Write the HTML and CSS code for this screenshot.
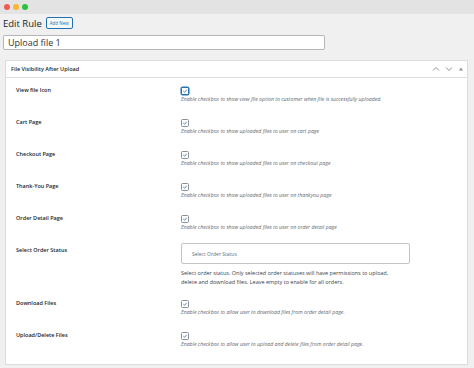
FILE: index.html
```html
<!DOCTYPE html>
<html lang="en">
  <head>
    <meta charset="UTF-8" />
    <title>Edit Rule</title>
    <link rel="stylesheet" href="styles.css">
  </head>
  <body>
    <div class="titlebar">
      <span class="dot red"></span>
      <span class="dot yellow"></span>
      <span class="dot green"></span>
    </div>

    <div class="wrap">
      <div class="page-head">
        <h1>Edit Rule</h1>
        <a class="add-new">Add New</a>
      </div>

      <input class="rule-title" type="text" value="Upload file 1" />

      <div class="postbox">
        <div class="postbox-header">
          <h2>File Visibility After Upload</h2>
          <div class="handle-actions">
            <svg width="8" height="6" viewBox="0 0 8 6"><path d="M1 4.5 4 1.5 7 4.5" fill="none" stroke="#8c8f94" stroke-width="1"/></svg>
            <svg width="8" height="6" viewBox="0 0 8 6"><path d="M1 1.5 4 4.5 7 1.5" fill="none" stroke="#8c8f94" stroke-width="1"/></svg>
            <svg width="6" height="6" viewBox="0 0 6 6"><path d="M1 4.5 3 1.5 5 4.5Z" fill="#8c8f94"/></svg>
          </div>
        </div>

        <div class="postbox-body">
          <div class="field-row">
            <label>View file Icon</label>
            <div class="field">
              <span class="check focused"><svg viewBox="0 0 8 8"><path d="M1.8 4.2 3.4 5.7 6.3 2.4" fill="none" stroke="#2271b1" stroke-width="1.1"/></svg></span>
              <p class="desc">Enable checkbox to show view file option to customer when file is successfully uploaded.</p>
            </div>
          </div>

          <div class="field-row">
            <label>Cart Page</label>
            <div class="field">
              <span class="check"><svg viewBox="0 0 8 8"><path d="M1.8 4.2 3.4 5.7 6.3 2.4" fill="none" stroke="#2271b1" stroke-width="1.1"/></svg></span>
              <p class="desc">Enable checkbox to show uploaded files to user on cart page</p>
            </div>
          </div>

          <div class="field-row">
            <label>Checkout Page</label>
            <div class="field">
              <span class="check"><svg viewBox="0 0 8 8"><path d="M1.8 4.2 3.4 5.7 6.3 2.4" fill="none" stroke="#2271b1" stroke-width="1.1"/></svg></span>
              <p class="desc">Enable checkbox to show uploaded files to user on checkout page</p>
            </div>
          </div>

          <div class="field-row">
            <label>Thank-You Page</label>
            <div class="field">
              <span class="check"><svg viewBox="0 0 8 8"><path d="M1.8 4.2 3.4 5.7 6.3 2.4" fill="none" stroke="#2271b1" stroke-width="1.1"/></svg></span>
              <p class="desc">Enable checkbox to show uploaded files to user on thankyou page</p>
            </div>
          </div>

          <div class="field-row">
            <label>Order Detail Page</label>
            <div class="field">
              <span class="check"><svg viewBox="0 0 8 8"><path d="M1.8 4.2 3.4 5.7 6.3 2.4" fill="none" stroke="#2271b1" stroke-width="1.1"/></svg></span>
              <p class="desc">Enable checkbox to show uploaded files to user on order detail page</p>
            </div>
          </div>

          <div class="field-row select-row">
            <label>Select Order Status</label>
            <div class="field">
              <div class="select-box">Select Order Status</div>
              <p class="help">Select order status. Only selected order statuses will have permissions to upload, delete and download files. Leave empty to enable for all orders.</p>
            </div>
          </div>

          <div class="field-row">
            <label>Download Files</label>
            <div class="field">
              <span class="check"><svg viewBox="0 0 8 8"><path d="M1.8 4.2 3.4 5.7 6.3 2.4" fill="none" stroke="#2271b1" stroke-width="1.1"/></svg></span>
              <p class="desc">Enable checkbox to allow user to download files from order detail page.</p>
            </div>
          </div>

          <div class="field-row">
            <label>Upload/Delete Files</label>
            <div class="field">
              <span class="check"><svg viewBox="0 0 8 8"><path d="M1.8 4.2 3.4 5.7 6.3 2.4" fill="none" stroke="#2271b1" stroke-width="1.1"/></svg></span>
              <p class="desc">Enable checkbox to allow user to upload and delete files from order detail page.</p>
            </div>
          </div>
        </div>
      </div>
    </div>
  </body>
</html>
```

FILE: styles.css
```css
body {
  margin: 0;
  font-family: "Open Sans", "Noto Sans", sans-serif;
  background-color: #f0f0f1;
  color: #1d2327;
}
.titlebar {
  height: 14px;
  background-color: #e3e3e3;
  display: flex;
  align-items: center;
  gap: 3px;
  padding-left: 4px;
}
.dot {
  width: 6px;
  height: 6px;
  border-radius: 50%;
}
.red {
  background-color: #f25a55;
}
.yellow {
  background-color: #f7b731;
}
.green {
  background-color: #2dc23e;
}
.wrap {
  padding: 0 6px 0 3px;
}
.page-head {
  display: flex;
  align-items: center;
  gap: 4px;
  height: 18px;
}
h1 {
  margin: 0;
  font-size: 9.5px;
  font-weight: 400;
  color: #1d2327;
}
.add-new {
  font-size: 4.5px;
  color: #2271b1;
  border: 1px solid #2271b1;
  border-radius: 2px;
  padding: 2px 3px;
  background-color: #f6f7f7;
}
.rule-title {
  display: block;
  box-sizing: border-box;
  width: 322px;
  height: 15px;
  margin: 3px 0 0;
  padding: 0 4px;
  border: 1px solid #b6b6b6;
  border-radius: 2px;
  font-family: inherit;
  font-size: 9px;
  color: #2c3338;
  background-color: #fff;
}
.postbox {
  margin: 10px 0 0 2px;
  background-color: #fff;
  border: 1px solid #dcdcde;
  box-shadow: 0 1px 1px rgba(0, 0, 0, 0.04);
}
.postbox-header {
  display: flex;
  justify-content: space-between;
  align-items: center;
  height: 16px;
  border-bottom: 1px solid #dcdcde;
  padding: 0 3px 0 5px;
}
.postbox-header h2 {
  margin: 0;
  font-size: 5.5px;
  font-weight: 600;
}
.handle-actions {
  display: flex;
  align-items: center;
  gap: 5px;
}
.postbox-body {
  padding: 0 10px 9px;
}
.field-row {
  display: grid;
  grid-template-columns: 165px 1fr;
  height: 32px;
}
.field-row label {
  font-size: 5.5px;
  font-weight: 600;
  padding-top: 9px;
  line-height: 7px;
}
.field {
  padding-top: 9px;
}
.check {
  display: block;
  box-sizing: border-box;
  width: 8px;
  height: 8px;
  border: 1px solid #8c8f94;
  border-radius: 1.5px;
  background-color: #fff;
}
.check svg {
  display: block;
  width: 6px;
  height: 6px;
}
.check.focused {
  border-color: #2271b1;
  box-shadow: 0 0 0 0.5px #2271b1;
}
.desc {
  margin: 1px 0 0;
  font-size: 5.2px;
  font-style: italic;
  color: #646970;
  line-height: 7px;
}
.select-row {
  height: 53px;
}
.select-row .field {
  padding-top: 5px;
}
.select-box {
  box-sizing: border-box;
  width: 229px;
  height: 21px;
  border: 1px solid #c3c4c7;
  border-radius: 2px;
  font-size: 5px;
  color: #646970;
  padding: 0 10px;
  display: flex;
  align-items: center;
}
.help {
  margin: 5px 0 0;
  font-size: 5.5px;
  line-height: 9px;
  color: #3c434a;
  width: 216px;
}
```
